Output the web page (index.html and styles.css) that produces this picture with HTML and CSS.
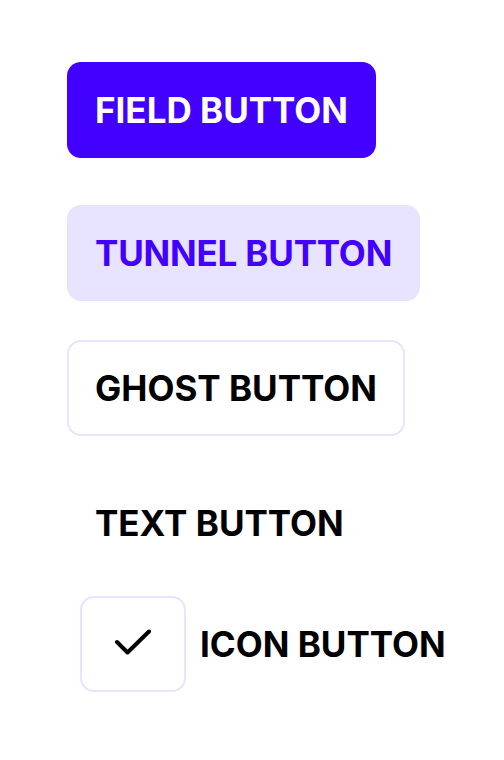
FILE: index.html
```html
<!DOCTYPE html>
<html lang="en">
<head>
<meta charset="UTF-8">
<meta name="viewport" content="width=device-width, initial-scale=1.0">
<title>Buttons</title>
<link rel="stylesheet" href="styles.css">
</head>
<body>
<div class="button-list">
  <button class="btn btn-field">FIELD BUTTON</button>
  <button class="btn btn-tunnel">TUNNEL BUTTON</button>
  <button class="btn btn-ghost">GHOST BUTTON</button>
  <button class="btn btn-text">TEXT BUTTON</button>
  <div class="icon-row">
    <button class="icon-box" aria-label="check">
      <svg width="40" height="30" viewBox="0 0 40 30">
        <polyline points="4,13 14.5,23.5 36,2.5" fill="none" stroke="#000" stroke-width="4" stroke-linecap="round" stroke-linejoin="round"/>
      </svg>
    </button>
    <span class="icon-label">ICON BUTTON</span>
  </div>
</div>
</body>
</html>
```

FILE: styles.css
```css
body {
  margin: 0;
  background: #fff;
  font-family: Inter, "Liberation Sans", sans-serif;
}
.button-list {
  display: flex;
  flex-direction: column;
  align-items: flex-start;
  padding: 62px 0 0 67px;
}
.btn {
  height: 96px;
  padding: 0 28px;
  border: none;
  border-radius: 14px;
  font-family: inherit;
  font-size: 35px;
  font-weight: 700;
  background: none;
  color: #000;
}
.btn-field {
  background: #4200ff;
  color: #fff;
}
.btn-tunnel {
  margin-top: 47px;
  background: #e8e3ff;
  color: #4200ff;
  letter-spacing: -0.2px;
}
.btn-ghost {
  margin-top: 39px;
  border: 2px solid #e8e3ff;
  padding: 0 26px;
}
.btn-text {
  margin-top: 39px;
}
.icon-row {
  display: flex;
  align-items: center;
  gap: 14px;
  margin-top: 25px;
  margin-left: 13px;
}
.icon-box {
  width: 106px;
  height: 96px;
  border: 2px solid #e8e3ff;
  border-radius: 14px;
  background: #fff;
  display: flex;
  align-items: center;
  justify-content: center;
  padding: 0;
}
.icon-label {
  font-size: 35px;
  font-weight: 700;
}
```
